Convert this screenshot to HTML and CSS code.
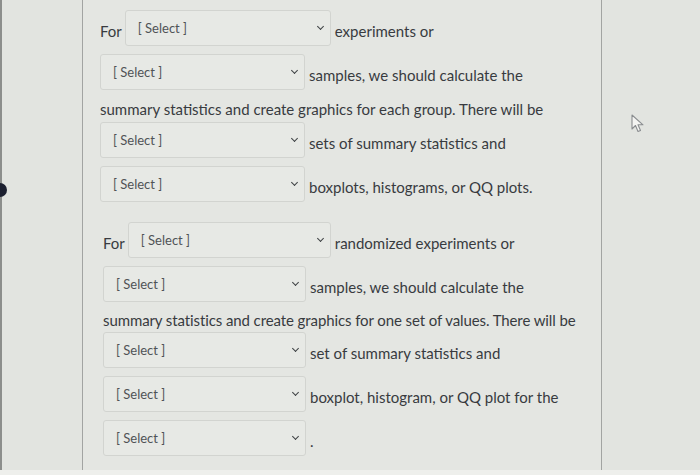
FILE: index.html
```html
<!DOCTYPE html>
<html>
<head>
<meta charset="utf-8">
<link rel="stylesheet" href="styles.css">
</head>
<body>
<div class="screen">
  <div class="gutter"></div>
  <main class="content">
    <section class="question">
      <div class="row">
        <span class="word">For</span>
        <div class="select wide"><span>[ Select ]</span><i class="chev"></i></div>
        <span class="word">experiments or</span>
      </div>
      <div class="row">
        <div class="select"><span>[ Select ]</span><i class="chev"></i></div>
        <span class="word">samples, we should calculate the</span>
      </div>
      <div class="text-row">summary statistics and create graphics for each group. There will be</div>
      <div class="row">
        <div class="select"><span>[ Select ]</span><i class="chev"></i></div>
        <span class="word">sets of summary statistics and</span>
      </div>
      <div class="row">
        <div class="select"><span>[ Select ]</span><i class="chev"></i></div>
        <span class="word">boxplots, histograms, or QQ plots.</span>
      </div>
    </section>
    <section class="question second">
      <div class="row">
        <span class="word">For</span>
        <div class="select wide"><span>[ Select ]</span><i class="chev"></i></div>
        <span class="word">randomized experiments or</span>
      </div>
      <div class="row">
        <div class="select"><span>[ Select ]</span><i class="chev"></i></div>
        <span class="word">samples, we should calculate the</span>
      </div>
      <div class="text-row">summary statistics and create graphics for one set of values. There will be</div>
      <div class="row">
        <div class="select"><span>[ Select ]</span><i class="chev"></i></div>
        <span class="word">set of summary statistics and</span>
      </div>
      <div class="row">
        <div class="select"><span>[ Select ]</span><i class="chev"></i></div>
        <span class="word">boxplot, histogram, or QQ plot for the</span>
      </div>
      <div class="row">
        <div class="select"><span>[ Select ]</span><i class="chev"></i></div>
        <span class="word">.</span>
      </div>
    </section>
  </main>
  <div class="side"></div>
  <div class="dot"></div>
  <svg class="cursor" width="14" height="20" viewBox="0 0 14 20">
    <path d="M1 1 L1 15 L4.5 11.5 L7 17.5 L9.5 16.5 L7 10.8 L12 10.8 Z" fill="#f4f4f2" stroke="#8a8d90" stroke-width="1.1" stroke-linejoin="round"/>
  </svg>
</div>
</body>
</html>
```
FILE: styles.css
```css
html, body {
  margin: 0;
  padding: 0;
}
body {
  width: 700px;
  height: 475px;
  overflow: hidden;
  background: #e3e5e1;
  font-family: Lato, "Open Sans", sans-serif;
  color: #383b3f;
}
.screen {
  position: relative;
  display: flex;
  width: 700px;
  height: 470px;
  border-bottom: 5px solid #eeefec;
}
.gutter {
  width: 80px;
  border-left: 2px solid #8c8e8c;
  background: #e2e4e0;
}
.content {
  box-sizing: border-box;
  width: 520px;
  border-left: 1px solid #a2a4a2;
  border-right: 1px solid #a2a4a2;
  padding-left: 17px;
  padding-top: 10px;
  background: #e4e6e2;
}
.side {
  flex: 1;
  background: #e2e4e0;
}
.question {
  display: flex;
  flex-direction: column;
}
.question.second {
  margin-top: 12px;
  padding-left: 3px;
}
.row {
  display: flex;
  align-items: center;
  gap: 4px;
  font-size: 15px;
  height: 36px;
  margin-bottom: 8px;
}
.row .word {
  padding-top: 6px;
}
.row .word:first-child {
  margin-right: -1px;
}
.text-row {
  font-size: 15px;
  line-height: 20px;
  height: 20px;
  margin-top: 1px;
  margin-bottom: 3px;
  white-space: nowrap;
}
.second .text-row {
  margin-top: 0;
  margin-bottom: 2px;
  letter-spacing: -0.1px;
}
.select {
  box-sizing: border-box;
  width: 205px;
  height: 36px;
  display: flex;
  align-items: center;
  justify-content: space-between;
  padding: 0 5px 0 12px;
  background: #e7e9e5;
  border: 1px solid #d2d4d0;
  border-radius: 3px;
  font-size: 13px;
  color: #505356;
}
.select.wide {
  width: 206px;
}
.second .select,
.second .select.wide {
  width: 203px;
}
.chev {
  width: 4px;
  height: 4px;
  border-right: 1.6px solid #3e4144;
  border-bottom: 1.6px solid #3e4144;
  transform: rotate(45deg);
  margin-top: -3px;
  margin-right: 2px;
}
.dot {
  position: absolute;
  left: -7px;
  top: 183px;
  width: 14px;
  height: 14px;
  border-radius: 50%;
  background: #1c2030;
}
.cursor {
  position: absolute;
  left: 631px;
  top: 114px;
}
```
